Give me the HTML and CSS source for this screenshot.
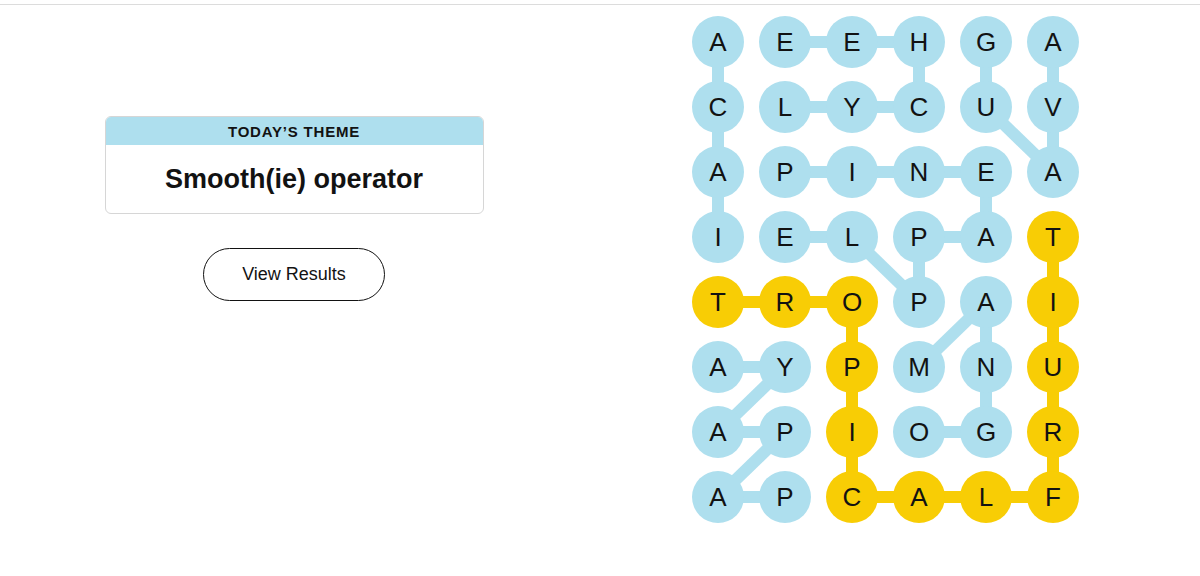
FILE: index.html
```html
<!DOCTYPE html>
<html lang="en">
<head>
<meta charset="utf-8">
<title>Strands</title>
<link rel="stylesheet" href="styles.css">
</head>
<body>
<div class="topbar"></div>
<main class="game">
  <section class="side">
    <div class="theme-card">
      <div class="theme-head">TODAY’S THEME</div>
      <div class="theme-body">Smooth(ie) operator</div>
    </div>
    <button class="results-btn" type="button">View Results</button>
  </section>
  <section class="board">
    <svg class="links" width="387" height="507" viewBox="0 0 387 507">
      <g class="blue" stroke="#aedfee" stroke-width="12" stroke-linecap="butt">
        <!-- ACAI -->
        <line x1="26" y1="26" x2="26" y2="221"/>
        <!-- LYCHEE -->
        <line x1="93" y1="26" x2="227" y2="26"/>
        <line x1="227" y1="26" x2="227" y2="91"/>
        <line x1="93" y1="91" x2="227" y2="91"/>
        <!-- GUAVA -->
        <line x1="294" y1="26" x2="294" y2="91"/>
        <line x1="294" y1="91" x2="361" y2="156"/>
        <line x1="361" y1="26" x2="361" y2="156"/>
        <!-- PINEAPPLE -->
        <line x1="93" y1="156" x2="294" y2="156"/>
        <line x1="294" y1="156" x2="294" y2="221"/>
        <line x1="227" y1="221" x2="294" y2="221"/>
        <line x1="227" y1="221" x2="227" y2="286"/>
        <line x1="227" y1="286" x2="160" y2="221"/>
        <line x1="93" y1="221" x2="160" y2="221"/>
        <!-- MANGO -->
        <line x1="227" y1="351" x2="294" y2="286"/>
        <line x1="294" y1="286" x2="294" y2="416"/>
        <line x1="227" y1="416" x2="294" y2="416"/>
        <!-- PAPAYA -->
        <line x1="26" y1="351" x2="93" y2="351"/>
        <line x1="93" y1="351" x2="26" y2="416"/>
        <line x1="26" y1="416" x2="93" y2="416"/>
        <line x1="93" y1="416" x2="26" y2="481"/>
        <line x1="26" y1="481" x2="93" y2="481"/>
      </g>
      <g class="gold" stroke="#f8cd05" stroke-width="12" stroke-linecap="butt">
        <line x1="26" y1="286" x2="160" y2="286"/>
        <line x1="160" y1="286" x2="160" y2="481"/>
        <line x1="160" y1="481" x2="361" y2="481"/>
        <line x1="361" y1="221" x2="361" y2="481"/>
      </g>
    </svg>
    <div class="grid">
      <span class="cell t">A</span><span class="cell t">E</span><span class="cell t">E</span><span class="cell t">H</span><span class="cell t">G</span><span class="cell t">A</span>
      <span class="cell t">C</span><span class="cell t">L</span><span class="cell t">Y</span><span class="cell t">C</span><span class="cell t">U</span><span class="cell t">V</span>
      <span class="cell t">A</span><span class="cell t">P</span><span class="cell t">I</span><span class="cell t">N</span><span class="cell t">E</span><span class="cell t">A</span>
      <span class="cell t">I</span><span class="cell t">E</span><span class="cell t">L</span><span class="cell t">P</span><span class="cell t">A</span><span class="cell s">T</span>
      <span class="cell s">T</span><span class="cell s">R</span><span class="cell s">O</span><span class="cell t">P</span><span class="cell t">A</span><span class="cell s">I</span>
      <span class="cell t">A</span><span class="cell t">Y</span><span class="cell s">P</span><span class="cell t">M</span><span class="cell t">N</span><span class="cell s">U</span>
      <span class="cell t">A</span><span class="cell t">P</span><span class="cell s">I</span><span class="cell t">O</span><span class="cell t">G</span><span class="cell s">R</span>
      <span class="cell t">A</span><span class="cell t">P</span><span class="cell s">C</span><span class="cell s">A</span><span class="cell s">L</span><span class="cell s">F</span>
    </div>
  </section>
</main>
</body>
</html>
```
FILE: styles.css
```css
* { box-sizing: border-box; }

html, body {
  margin: 0;
  padding: 0;
  background: #ffffff;
  color: #121212;
  font-family: "Liberation Sans", Arial, sans-serif;
}

.topbar {
  height: 5px;
  border-bottom: 1px solid #dcdcdc;
}

.game {
  display: flex;
  align-items: flex-start;
  padding-top: 11px;
}

.side {
  width: 588px;
  display: flex;
  flex-direction: column;
  align-items: center;
  padding-top: 100px;
  gap: 34px;
}

.theme-card {
  width: 379px;
  border: 1px solid #d6d6d6;
  border-radius: 6px;
  overflow: hidden;
  background: #fff;
}

.theme-head {
  background: #aedfee;
  height: 28px;
  display: flex;
  align-items: center;
  justify-content: center;
  font-size: 15px;
  font-weight: 700;
  letter-spacing: 0.8px;
  color: #121212;
}

.theme-body {
  height: 68px;
  display: flex;
  align-items: center;
  justify-content: center;
  font-size: 27px;
  font-weight: 700;
  color: #121212;
}

.results-btn {
  width: 182px;
  height: 53px;
  border: 1px solid #121212;
  border-radius: 27px;
  background: #fff;
  font-family: "Liberation Sans", Arial, sans-serif;
  font-size: 18px;
  color: #121212;
  padding: 0;
}

.board {
  position: relative;
  margin-left: 104px;
  width: 387px;
  height: 507px;
}

.links {
  position: absolute;
  left: 0;
  top: 0;
}

.grid {
  position: relative;
  display: grid;
  grid-template-columns: repeat(6, 52px);
  grid-auto-rows: 52px;
  column-gap: 15px;
  row-gap: 13px;
}

.cell {
  width: 52px;
  height: 52px;
  border-radius: 50%;
  display: flex;
  align-items: center;
  justify-content: center;
  font-size: 26px;
  color: #121212;
}

.cell.t { background: #aedfee; }
.cell.s { background: #f8cd05; }
```
